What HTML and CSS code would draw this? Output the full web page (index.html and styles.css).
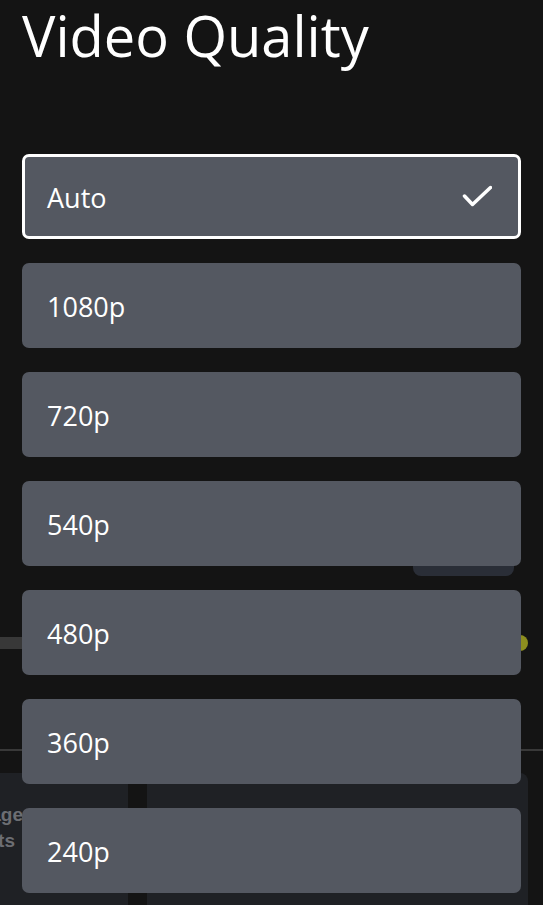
FILE: index.html
```html
<!DOCTYPE html>
<html lang="en">
<head>
<meta charset="utf-8">
<title>Video Quality</title>
<link rel="stylesheet" href="styles.css">
</head>
<body>
<div class="page">
  <div class="bg-spacer"></div>
  <div class="bg-btnrow"><div class="bg-btn"></div></div>
  <div class="bg-slider"><div class="bg-track"></div><div class="bg-thumb"></div></div>
  <div class="bg-divider"></div>
  <div class="bg-panels">
    <div class="bg-panel bg-panel-left">
      <div class="bg-label"><span>Storage</span><span class="bg-label-2">Assets</span></div>
    </div>
    <div class="bg-panel bg-panel-right"></div>
  </div>

  <div class="modal">
    <h1 class="title">Video Quality</h1>
    <div class="options">
      <div class="option selected">
        <span class="option-label">Auto</span>
        <svg class="check" width="30" height="24" viewBox="0 0 30 24"><path d="M2.5 11 L10.5 19.5 L28.5 2.5" fill="none" stroke="#fff" stroke-width="3.5" stroke-linecap="round" stroke-linejoin="round"/></svg>
      </div>
      <div class="option"><span class="option-label">1080p</span></div>
      <div class="option"><span class="option-label">720p</span></div>
      <div class="option"><span class="option-label">540p</span></div>
      <div class="option"><span class="option-label">480p</span></div>
      <div class="option"><span class="option-label">360p</span></div>
      <div class="option"><span class="option-label">240p</span></div>
    </div>
  </div>
</div>
</body>
</html>
```
FILE: styles.css
```css
html, body {
  margin: 0;
  padding: 0;
  background: #141414;
}
body {
  font-family: "Open Sans", "Noto Sans", sans-serif;
}
.page {
  position: relative;
  width: 543px;
  height: 905px;
  overflow: hidden;
  background: #141414;
}
/* dimmed page behind the dialog */
.bg-spacer {
  height: 536px;
}
.bg-btnrow {
  display: flex;
  justify-content: flex-end;
  padding-right: 29px;
}
.bg-btn {
  width: 101px;
  height: 40px;
  border-radius: 8px;
  background: #2a2e37;
}
.bg-slider {
  display: flex;
  align-items: center;
  height: 16px;
  margin-top: 59px;
  padding-right: 15px;
}
.bg-track {
  flex: 1;
  height: 12px;
  background: #383838;
}
.bg-thumb {
  width: 16px;
  height: 16px;
  border-radius: 50%;
  background: #8d8e1f;
}
.bg-divider {
  height: 2px;
  margin-top: 98px;
  background: #393939;
}
.bg-panels {
  display: flex;
  gap: 19px;
  margin-top: 22px;
  margin-left: -20px;
  padding-right: 15px;
}
.bg-panel {
  height: 200px;
  border-radius: 8px;
  background: #1f2125;
}
.bg-panel-left {
  width: 148px;
  padding-top: 29px;
  box-sizing: border-box;
}
.bg-panel-right {
  flex: 1;
}
.bg-label {
  width: 43px;
  display: flex;
  flex-direction: column;
  align-items: flex-end;
  font-family: "Liberation Sans", Arial, sans-serif;
  font-weight: 700;
  font-size: 19px;
  line-height: 26px;
  color: #6c6e73;
  white-space: nowrap;
}
.bg-label-2 {
  padding-right: 8px;
}
/* dialog overlay */
.modal {
  position: absolute;
  inset: 0;
  padding: 0 22px;
  box-sizing: border-box;
}
.title {
  margin: 0 0 84px;
  font-size: 56px;
  font-weight: 400;
  line-height: 70px;
  color: #ffffff;
}
.options {
  display: flex;
  flex-direction: column;
  gap: 24px;
}
.option {
  box-sizing: border-box;
  height: 85px;
  display: flex;
  align-items: center;
  justify-content: space-between;
  padding: 2px 26px 0 22px;
  border: 3px solid transparent;
  border-radius: 7px;
  background: #545861;
  color: #ffffff;
  font-size: 27px;
}
.option.selected {
  border-color: #ffffff;
}
.check {
  display: block;
  margin-top: -2px;
}
```
